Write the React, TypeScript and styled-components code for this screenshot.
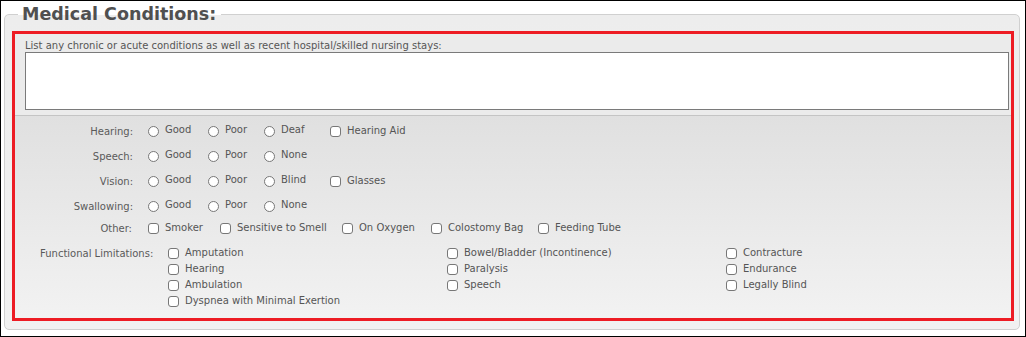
import React from 'react';
import styled, { createGlobalStyle } from 'styled-components';

const GlobalStyle = createGlobalStyle`
  html, body {
    margin: 0;
    padding: 0;
    background: #fff;
  }
  body {
    font-family: "DejaVu Sans", Verdana, sans-serif;
  }
`;

const Frame = styled.div`
  width: 1026px;
  height: 337px;
  box-sizing: border-box;
  border: 1px solid #000;
  background: #fff;
  padding: 0 5px 0 3px;
`;

const Fieldset = styled.fieldset`
  margin: 0;
  padding: 4px 5px 8px 7px;
  border: 1px solid #d0d0d0;
  border-radius: 5px;
  background: linear-gradient(#ededed, #f1f1f1);
  min-width: 0;
`;

const Legend = styled.legend`
  margin-left: 6px;
  padding: 0 5px 0 4px;
  font-size: 17.5px;
  line-height: 26px;
  font-weight: bold;
  color: #505050;
`;

const Highlight = styled.div`
  border: 3px solid #ed1c24;
  height: 290px;
  box-sizing: border-box;
  display: flex;
  flex-direction: column;
`;

const NotesSection = styled.div`
  padding: 6px 3px 5px 10px;
  background: #ebebeb;
`;

const NotesLabel = styled.div`
  font-size: 10px;
  line-height: 12px;
  color: #555;
`;

const NotesBox = styled.textarea`
  display: block;
  width: 984px;
  height: 58px;
  box-sizing: border-box;
  margin: 0;
  border: 1px solid #7a7a7a;
  background: #fff;
  resize: none;
  font-family: inherit;
`;

const Details = styled.div`
  flex: 1;
  border-top: 1px solid #c4c4c4;
  padding-top: 3px;
  background: linear-gradient(#e0e0e0, #f2f2f2);
`;

const RadioRow = styled.div`
  display: grid;
  grid-template-columns: 133px 60px 56px 66px auto;
  height: 25px;
  align-items: center;
`;

const RowLabel = styled.div`
  font-size: 10px;
  color: #5a5a5a;
  text-align: right;
  padding-right: 15px;
`;

const OtherRow = styled.div`
  display: flex;
  height: 18px;
  align-items: center;
`;

const OtherLabel = styled(RowLabel)`
  width: 133px;
  box-sizing: border-box;
  padding-right: 16px;
`;

const Option = styled.label<{ $w?: number; $lift?: number }>`
  display: flex;
  align-items: center;
  width: ${(p) => (p.$w ? `${p.$w}px` : 'auto')};
  flex-shrink: 0;
  font-size: 10px;
  color: #555;
  white-space: nowrap;

  span {
    padding-bottom: ${(p) => p.$lift ?? 1}px;
  }
`;

const Radio = styled.input.attrs({ type: 'radio' })`
  appearance: none;
  width: 11px;
  height: 11px;
  margin: 0 6px 0 0;
  border: 1px solid #777;
  border-radius: 50%;
  background: #fff;
  box-sizing: border-box;
`;

const Check = styled.input.attrs({ type: 'checkbox' })`
  appearance: none;
  width: 11px;
  height: 11px;
  margin: 0 6px 0 0;
  border: 1px solid #777;
  border-radius: 3px;
  background: #fff;
  box-sizing: border-box;
`;

const Limitations = styled.div`
  display: grid;
  grid-template-columns: 153px 279px 279px auto;
  margin-top: 8px;
`;

const LimitLabel = styled.div`
  font-size: 10px;
  color: #5a5a5a;
  padding-left: 25px;
  height: 16px;
  line-height: 18px;
`;

const LimitColumn = styled.div`
  display: flex;
  flex-direction: column;

  label {
    height: 16px;
  }
`;

const radioRows = [
  { label: 'Hearing:', options: ['Good', 'Poor', 'Deaf'], extra: 'Hearing Aid' },
  { label: 'Speech:', options: ['Good', 'Poor', 'None'] },
  { label: 'Vision:', options: ['Good', 'Poor', 'Blind'], extra: 'Glasses' },
  { label: 'Swallowing:', options: ['Good', 'Poor', 'None'] },
];

const others = [
  { text: 'Smoker', w: 72 },
  { text: 'Sensitive to Smell', w: 122 },
  { text: 'On Oxygen', w: 89 },
  { text: 'Colostomy Bag', w: 107 },
  { text: 'Feeding Tube' },
];

const limitations = [
  ['Amputation', 'Hearing', 'Ambulation', 'Dyspnea with Minimal Exertion'],
  ['Bowel/Bladder (Incontinence)', 'Paralysis', 'Speech'],
  ['Contracture', 'Endurance', 'Legally Blind'],
];

export default function App() {
  return (
    <>
      <GlobalStyle />
      <Frame>
        <Fieldset>
          <Legend>Medical Conditions:</Legend>
          <Highlight>
            <NotesSection>
              <NotesLabel>
                List any chronic or acute conditions as well as recent hospital/skilled nursing stays:
              </NotesLabel>
              <NotesBox />
            </NotesSection>
            <Details>
              {radioRows.map((row) => (
                <RadioRow key={row.label}>
                  <RowLabel>{row.label}</RowLabel>
                  {row.options.map((opt) => (
                    <Option key={opt} $lift={5}>
                      <Radio name={row.label} />
                      <span>{opt}</span>
                    </Option>
                  ))}
                  {row.extra && (
                    <Option $lift={3}>
                      <Check />
                      <span>{row.extra}</span>
                    </Option>
                  )}
                </RadioRow>
              ))}
              <OtherRow>
                <OtherLabel>Other:</OtherLabel>
                {others.map((o) => (
                  <Option key={o.text} $w={o.w}>
                    <Check />
                    <span>{o.text}</span>
                  </Option>
                ))}
              </OtherRow>
              <Limitations>
                <LimitLabel>Functional Limitations:</LimitLabel>
                {limitations.map((col, i) => (
                  <LimitColumn key={i}>
                    {col.map((item) => (
                      <Option key={item}>
                        <Check />
                        <span>{item}</span>
                      </Option>
                    ))}
                  </LimitColumn>
                ))}
              </Limitations>
            </Details>
          </Highlight>
        </Fieldset>
      </Frame>
    </>
  );
}
